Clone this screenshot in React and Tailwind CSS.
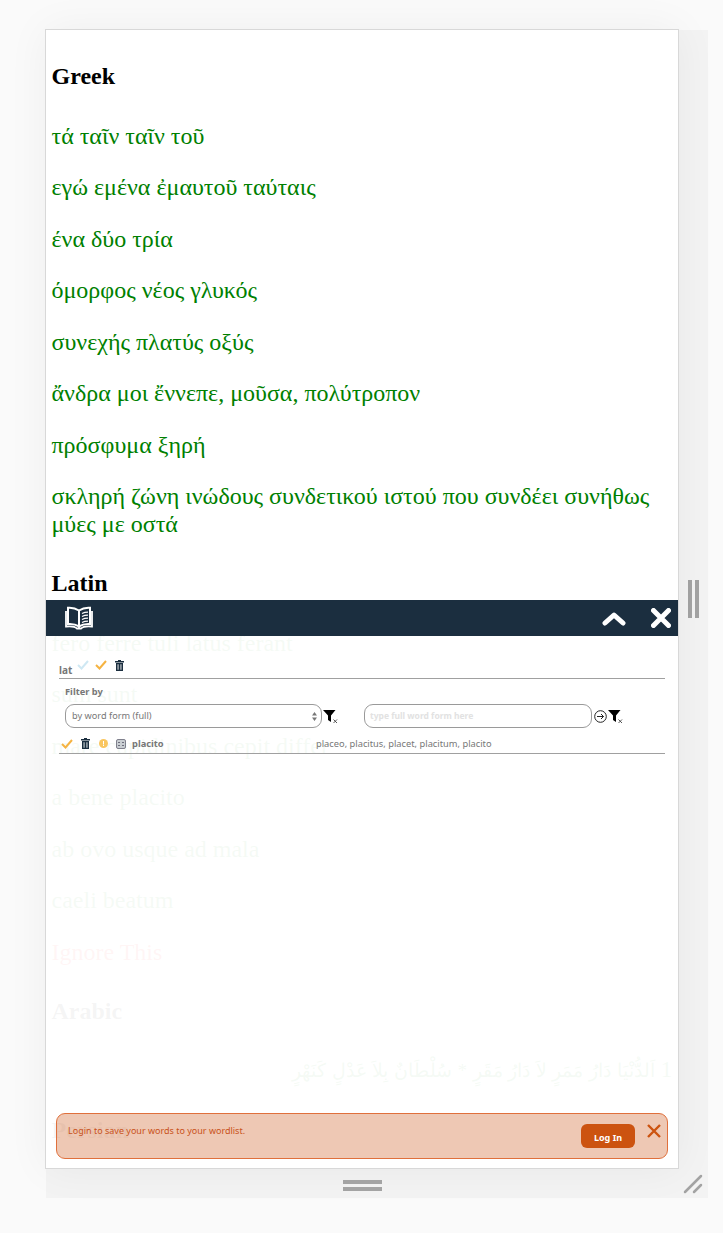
const greek = [
  'τά ταῖν ταῖν τοῦ',
  'εγώ εμένα ἐμαυτοῦ ταύταις',
  'ένα δύο τρία',
  'όμορφος νέος γλυκός',
  'συνεχής πλατύς οξύς',
  'ἄνδρα μοι ἔννεπε, μοῦσα, πολύτροπον',
  'πρόσφυμα ξηρή',
  'σκληρή ζώνη ινώδους συνδετικού ιστού που συνδέει συνήθως μύες με οστά',
]

const latin = [
  'fero ferre tuli latus ferant',
  'sum sunt',
  'mare cupidinibus cepit differ',
  'a bene placito',
  'ab ovo usque ad mala',
  'caeli beatum',
]

function Check({ color }) {
  return (
    <svg width="12" height="10" viewBox="0 0 12 10" fill="none" stroke={color} strokeWidth="2">
      <path d="M1 5l3.5 3.5L11 1" />
    </svg>
  )
}

function Trash() {
  return (
    <svg width="9" height="11" viewBox="0 0 9 11" fill="#1b2e3f">
      <path d="M3 0h3v1h3v1.4H0V1h3zM1 3h7v8H1zM2.600 4.200v5.600h.9V4.200zm2.900 0v5.600h.9V4.200z" fillRule="evenodd" />
    </svg>
  )
}

function FunnelX() {
  return (
    <svg width="15" height="15" viewBox="0 0 15 15">
      <path d="M0 1h12.500L8 6.500V13L5 11V6.500z" fill="#000" />
      <path d="M10.500 10.500l3.500 3.500M14 10.500L10.500 14" stroke="#444" strokeWidth="0.9" />
    </svg>
  )
}

function BookIcon() {
  return (
    <svg width="28" height="24" viewBox="0 0 28 24" fill="none" stroke="#fff">
      <path d="M14 4.500C11 2.500 7 1.500 3 1.800V18c4-.3 8 .4 11 2.400z" strokeWidth="2" />
      <path d="M14 4.500c3-2 7-3 11-2.700V18c-4-.3-8 .4-11 2.400z" strokeWidth="2" />
      <path d="M1 5v15.500c4.500-.5 9 0 11 2h4c2-2 6.500-2.500 11-2V5" strokeWidth="1.800" />
      <path d="M17 7.500c2-1 4-1.300 6-1.300M17 10.500c2-1 4-1.300 6-1.300M17 13.500c2-1 4-1.300 6-1.300M17 16.500c2-1 4-1.300 6-1.300" strokeWidth="1.300" />
    </svg>
  )
}

function App() {
  return (
    <div className="w-[723px] h-[1233px] bg-[#fafafa] pt-[30px] pl-[46px] font-['Liberation_Serif',serif]">
      <div className="w-[662px] h-[1168px] bg-[#f3f3f3] flex flex-col">
        <div className="flex h-[1139px]">
          <div className="relative -mt-px -ml-px shrink-0 w-[634px] h-[1140px] overflow-hidden bg-white border border-[#d8d8d8] shadow-[0_0_40px_rgba(0,0,0,0.05)] px-[5.5px] pt-px text-[24px] leading-[27.5px]">
            <h2 className="font-bold my-8 text-black">Greek</h2>
            {greek.map((line) => (
              <p key={line} className="my-6 text-[#008000]">{line}</p>
            ))}
            <h2 className="font-bold my-8 text-black">Latin</h2>
            {latin.map((line) => (
              <p key={line} className="my-6 text-[#008000]">{line}</p>
            ))}
            <p className="my-6 text-[#ff0000]">Ignore This</p>
            <h2 className="font-bold mt-8 mb-[30px] text-black">Arabic</h2>
            <p dir="rtl" className="my-6 h-[29.5px] text-[#008000]">
              1 <span className="text-[19.4px] [word-spacing:0.7px]">اَلدُّنْيَا دَارُ مَمَرٍ لاَ دَارُ مَقَرٍ * سُلْطَانٌ بِلاَ عَدْلٍ كَنَهْرٍ</span>
            </p>
            <h2 className="font-bold my-8 text-black">Persian</h2>

            {/* popup laid over the page */}
            <div className="absolute left-0 right-0 bottom-0 h-[568px] bg-white/[0.96] font-['Noto_Sans',sans-serif] text-[#777]">
              <div className="h-9 bg-[#1b2e3f] flex items-center pl-[19px] pr-[7px]">
                <BookIcon />
                <div className="ml-auto flex items-center gap-[25px]">
                  <svg width="24" height="16" viewBox="0 0 24 16" fill="none" stroke="#fff" strokeWidth="5" strokeLinecap="round" strokeLinejoin="round">
                    <path d="M3 13l9-8 9 8" />
                  </svg>
                  <svg width="20" height="20" viewBox="0 0 20 20" fill="none" stroke="#fff" strokeWidth="5" strokeLinecap="round">
                    <path d="M2.500 2.500l15 15M17.500 2.500l-15 15" />
                  </svg>
                </div>
              </div>

              <div className="px-[13px] pt-6">
                <div className="h-[19px] border-b border-[#a0a0a0] flex items-start">
                  <span className="w-[18px] text-[10px] leading-[14px] font-bold mt-[3px]">lat</span>
                  <Check color="#cfe8f3" />
                  <span className="ml-[6px]"><Check color="#f5b342" /></span>
                  <span className="ml-[8px]"><Trash /></span>
                </div>

                <div className="pl-[6px] pt-[6px]">
                  <div className="text-[9.3px] leading-[13px] font-bold">Filter by</div>
                  <div className="flex items-center mt-[6px] h-6">
                    <div className="w-[257px] h-6 border border-[#9a9a9a] rounded-[9px] flex items-center justify-between pl-[6px] pr-[4px] text-[9.2px]">
                      <span>by word form (full)</span>
                      <svg width="5" height="9" viewBox="0 0 5 9" fill="#777"><path d="M2.500 0L5 3.500H0zM2.500 9L0 5.500h5z" /></svg>
                    </div>
                    <span className="ml-[1px]"><FunnelX /></span>
                    <div className="ml-[26px] w-[228px] h-6 border border-[#9a9a9a] rounded-[9px] flex items-center pl-[5px] text-[8.5px] font-bold text-[#e2e2e2]">
                      type full word form here
                    </div>
                    <svg className="ml-[2px]" width="13" height="13" viewBox="0 0 13 13" fill="none" stroke="#222" strokeWidth="1">
                      <circle cx="6.500" cy="6.500" r="5.800" />
                      <path d="M3 6.500h6.500M7 4l2.500 2.500L7 9" />
                    </svg>
                    <span className="ml-[1px]"><FunnelX /></span>
                  </div>
                </div>

                <div className="mt-[9px] h-[17px] border-b border-[#a0a0a0] flex items-start text-[9.3px] leading-[13px]">
                  <span className="ml-[2px] mt-[2px]"><Check color="#f5b342" /></span>
                  <span className="ml-[8px] mt-px"><Trash /></span>
                  <svg className="ml-[9px] mt-[2px]" width="9" height="9" viewBox="0 0 9 9">
                    <circle cx="4.500" cy="4.500" r="4.500" fill="#f9c65f" />
                    <rect x="4" y="2" width="1" height="3.500" fill="#fff" />
                    <rect x="4" y="6" width="1" height="1" fill="#fff" />
                  </svg>
                  <svg className="ml-[8px] mt-[2px]" width="10" height="10" viewBox="0 0 10 10" fill="none" stroke="#556">
                    <rect x="0.500" y="0.500" width="9" height="9" rx="1.500" fill="#c9ced2" strokeWidth="0.700" />
                    <path d="M2 3.500h2M2 6.500h2M6 3.500h2M6 6.500h2" strokeWidth="0.800" />
                  </svg>
                  <span className="ml-[6px] font-bold w-[184px]">placito</span>
                  <span>placeo, placitus, placet, placitum, placito</span>
                </div>
              </div>

              {/* login notice */}
              <div className="absolute left-[10px] top-[513px] w-[612px] h-[46px] rounded-[9px] border border-[#e0703c] bg-[#ce6229]/35 flex items-start pl-[11px] pr-[6px] text-[#c9521a]">
                <span className="text-[9px] leading-[13px] mt-[10px]">Login to save your words to your wordlist.</span>
                <button className="ml-auto mt-[10px] w-[54px] h-6 rounded-[6px] bg-[#cc5310] text-white text-[9px] font-bold">Log In</button>
                <svg className="ml-[12px] mt-[10px]" width="14" height="14" viewBox="0 0 14 14" fill="none" stroke="#cc5310" strokeWidth="2.400">
                  <path d="M1 1l12 12M13 1L1 13" />
                </svg>
              </div>
            </div>
          </div>

          {/* side resize handle */}
          <div className="w-[29px] flex justify-center items-start gap-[3px] pt-[550px]">
            <div className="w-1 h-[38px] bg-[#a3a3a3]" />
            <div className="w-1 h-[38px] bg-[#a3a3a3]" />
          </div>
        </div>

        {/* bottom resize handle */}
        <div className="relative flex-1">
          <div className="ml-[297px] mt-[11px] w-[39px] flex flex-col gap-[3px]">
            <div className="h-1 bg-[#a3a3a3]" />
            <div className="h-1 bg-[#a3a3a3]" />
          </div>
          <svg className="absolute right-[5px] top-[5px]" width="20" height="20" viewBox="0 0 20 20" fill="none" stroke="#a3a3a3" strokeWidth="2.500" strokeLinecap="round">
            <path d="M2 18L18 2M11 18l7-7" />
          </svg>
        </div>
      </div>
    </div>
  )
}

export default App
